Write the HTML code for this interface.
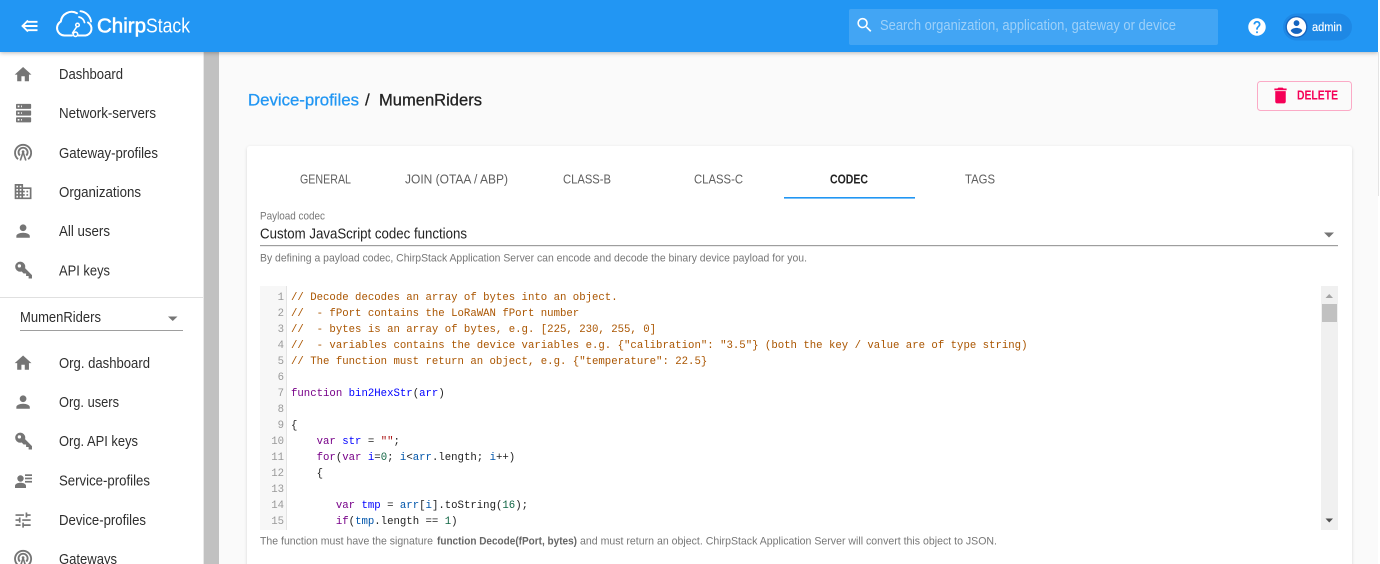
<!DOCTYPE html>
<html><head><meta charset="utf-8"><title>ChirpStack</title>
<style>
html,body{margin:0;padding:0;width:1380px;height:564px;overflow:hidden;background:#fff}
svg{display:block;font-family:"Liberation Sans",sans-serif}
.n{font-size:14.3px;fill:#2e2e2e}
.m{font-family:"Liberation Mono",monospace;font-size:10.68px;white-space:pre;fill:#222}
.l{font-family:"Liberation Mono",monospace;font-size:10.68px;fill:#999;text-anchor:end}
.c{fill:#a50}.k{fill:#708}.d{fill:#00f}.v{fill:#05a}.s{fill:#a11}.u{fill:#164}
.t{font-size:12.6px;fill:#5f5f5f}
.i{fill:#757575}
</style></head><body>
<svg width="1380" height="564" viewBox="0 0 1380 564" xmlns="http://www.w3.org/2000/svg">
<defs>
<filter id="sh" x="-5%" y="-5%" width="110%" height="130%"><feDropShadow dx="0" dy="1" stdDeviation="2" flood-color="#000" flood-opacity=".28"/></filter>
<filter id="cs" x="-2%" y="-5%" width="104%" height="110%"><feDropShadow dx="0" dy="1" stdDeviation="1.5" flood-color="#000" flood-opacity=".14"/></filter>
<path id="home" d="M10 20v-6h4v6h5v-8h3L12 3 2 12h3v8z"/>
<path id="user" d="M12,4A4,4 0 0,1 16,8A4,4 0 0,1 12,12A4,4 0 0,1 8,8A4,4 0 0,1 12,4M12,14C16.42,14 20,15.79 20,18V20H4V18C4,15.79 7.58,14 12,14Z"/>
<path id="key" d="M22,18V22H18V19H15V16H12L9.74,13.74C9.19,13.91 8.61,14 8,14A6,6 0 0,1 2,8A6,6 0 0,1 8,2A6,6 0 0,1 14,8C14,8.61 13.91,9.19 13.74,9.74L22,18M7,5A2,2 0 0,0 5,7A2,2 0 0,0 7,9A2,2 0 0,0 9,7A2,2 0 0,0 7,5Z"/>
<g id="tower" fill="none" stroke="#757575" stroke-width="2.2">
<path d="M6 19.8A9.6 9.6 0 1 1 18 19.8"/>
<path d="M8.2 15.5A5.4 5.4 0 1 1 15.8 15.5"/>
<path d="M12 11.5L8.7 21.5M12 11.5L15.3 21.5" stroke-width="1.9"/>
<circle cx="12" cy="10.8" r="1.6" fill="#757575" stroke="none"/>
</g>
</defs>

<rect width="1380" height="564" fill="#fff"/>
<!-- main background -->
<rect x="219" y="0" width="1161" height="564" fill="#fafafa"/>
<rect x="204" y="0" width="15" height="564" fill="#c1c1c1"/>
<rect x="203" y="0" width="1" height="564" fill="#e8e8e8"/>

<!-- card -->
<rect x="247" y="146" width="1105" height="430" rx="3" fill="#fff" filter="url(#cs)"/>

<!-- header -->
<rect x="0" y="0" width="1378" height="52" fill="#2196f3" filter="url(#sh)"/>
<rect x="1378" y="0" width="2" height="564" fill="#fff"/>
<rect x="1378" y="52" width="1" height="144" fill="#e4e4e4"/>

<!-- back arrow -->
<g stroke="#fff" stroke-width="1.9" fill="none">
<path d="M28 20.5L22.5 26L28 31.5"/>
<path d="M23 26H37.5M27.5 21.8H37.5M27.5 30.2H37.5"/>
</g>

<!-- logo -->
<g fill="none" stroke="#fff" stroke-width="2" stroke-linecap="round">
<path d="M72 35.5H64.5A7.5 7.5 0 0 1 60.8 21.5A11 11 0 0 1 77 13.2"/>
<path d="M88 22.5A7 7 0 0 1 85.5 35.5H78.5"/>
<circle cx="75.5" cy="34.3" r="2.2" stroke-width="1.6"/>
<circle cx="77.5" cy="25" r="1.8" stroke-width="1.5"/>
<path d="M76.8 26.7L72.5 33" stroke-width="1.5"/>
<path d="M79 17A7 7 0 0 1 84.5 22.5" stroke-width="1.8"/>
<path d="M80.5 11.2A12 12 0 0 1 91 21.5" stroke-width="1.9"/>
</g>
<text x="97" y="32.5" font-size="20.5" fill="#fff" stroke="#fff" stroke-width=".55" textLength="49" lengthAdjust="spacingAndGlyphs">Chirp</text>
<text x="146" y="32.5" font-size="20.5" fill="#fff" textLength="44" lengthAdjust="spacingAndGlyphs">Stack</text>

<!-- search -->
<rect x="849" y="9" width="369" height="36" rx="2" fill="#fff" fill-opacity=".15"/>
<g transform="translate(855,15.5) scale(.8)"><path fill="#fff" d="M15.5 14h-.79l-.28-.27C15.41 12.59 16 11.11 16 9.5 16 5.91 13.09 3 9.5 3S3 5.91 3 9.5 5.91 16 9.5 16c1.61 0 3.09-.59 4.23-1.57l.27.28v.79l5 4.99L20.49 19l-4.99-5zm-6 0C7.01 14 5 11.99 5 9.5S7.01 5 9.5 5 14 7.01 14 9.5 11.99 14 9.5 14z"/></g>
<text x="880" y="30" font-size="14.3" fill="#fff" fill-opacity=".48" textLength="296" lengthAdjust="spacingAndGlyphs">Search organization, application, gateway or device</text>

<!-- help -->
<g transform="translate(1246.5,16.5) scale(.875)"><path fill="#fff" d="M12 2C6.48 2 2 6.48 2 12s4.48 10 10 10 10-4.48 10-10S17.52 2 12 2zm1 17h-2v-2h2v2zm2.07-7.75l-.9.92C13.45 12.9 13 13.5 13 15h-2v-.5c0-1.1.45-2.1 1.17-2.83l1.24-1.26c.37-.36.59-.86.59-1.41 0-1.1-.9-2-2-2s-2 .9-2 2H8c0-2.21 1.79-4 4-4s4 1.79 4 4c0 .88-.36 1.68-.93 2.25z"/></g>

<!-- admin chip -->
<rect x="1283" y="13.5" width="69" height="27" rx="13.5" fill="#1e88e5"/>
<circle cx="1296.5" cy="27" r="11" fill="#1565c0"/>
<g transform="translate(1285,15.5) scale(.96)"><path fill="#fff" d="M12 2C6.48 2 2 6.48 2 12s4.48 10 10 10 10-4.48 10-10S17.52 2 12 2zm0 3c1.66 0 3 1.34 3 3s-1.34 3-3 3-3-1.34-3-3 1.34-3 3-3zm0 14.2c-2.5 0-4.71-1.28-6-3.22.03-1.99 4-3.08 6-3.08 1.99 0 5.97 1.09 6 3.08-1.29 1.94-3.5 3.22-6 3.22z"/></g>
<text x="1312" y="31" font-size="12.3" fill="#fff" stroke="#fff" stroke-width=".15" textLength="30" lengthAdjust="spacingAndGlyphs">admin</text>

<!-- sidebar icons -->
<g class="i">
<use href="#home" transform="translate(13,64.5) scale(.84)"/>
<g transform="translate(13.5,103) scale(.84)"><path fill-rule="evenodd" d="M4,1H20A1,1 0 0,1 21,2V6A1,1 0 0,1 20,7H4A1,1 0 0,1 3,6V2A1,1 0 0,1 4,1M4,9H20A1,1 0 0,1 21,10V14A1,1 0 0,1 20,15H4A1,1 0 0,1 3,14V10A1,1 0 0,1 4,9M4,17H20A1,1 0 0,1 21,18V22A1,1 0 0,1 20,23H4A1,1 0 0,1 3,22V18A1,1 0 0,1 4,17M9,5H10V3H9V5M9,13H10V11H9V13M9,21H10V19H9V21M5,3V5H7V3H5M5,11V13H7V11H5M5,19V21H7V19H5Z"/></g>
<use href="#tower" transform="translate(13,142.5) scale(.84)"/>
<g transform="translate(13,181.5) scale(.84)"><path d="M18,15H16V17H18M18,11H16V13H18M20,19H12V17H14V15H12V13H14V11H12V9H20M10,7H8V5H10M10,11H8V9H10M10,15H8V13H10M10,19H8V17H10M6,7H4V5H6M6,11H4V9H6M6,15H4V13H6M6,19H4V17H6M12,7V3H2V21H22V7H12Z"/></g>
<use href="#user" transform="translate(13,221) scale(.84)"/>
<use href="#key" transform="translate(13.5,260) scale(.84)"/>
<use href="#home" transform="translate(13,353) scale(.84)"/>
<use href="#user" transform="translate(13,392) scale(.84)"/>
<use href="#key" transform="translate(13.5,431) scale(.84)"/>
<g transform="translate(15,474)"><circle cx="5.5" cy="4.5" r="3.2"/><path d="M0 14V12C0 9.8 3 8.8 5.5 8.8S11 9.8 11 12V14Z"/><rect x="10" y="0.3" width="7" height="1.7"/><rect x="10" y="3.6" width="7" height="1.7"/><rect x="10" y="6.9" width="7" height="1.7"/></g>
<g transform="translate(13,510) scale(.84)"><path d="M3 17v2h6v-2H3zM3 5v2h10V5H3zm10 16v-2h8v-2h-8v-2h-2v6h2zM7 9v2H3v2h4v2h2V9H7zm14 4v-2H11v2h10zm-6-4h2V7h4V5h-4V3h-2v6z"/></g>
<use href="#tower" transform="translate(13,548.5) scale(.84)"/>
</g>

<!-- sidebar text -->
<text class="n" x="59" y="79" textLength="64" lengthAdjust="spacingAndGlyphs">Dashboard</text>
<text class="n" x="59" y="118" textLength="97" lengthAdjust="spacingAndGlyphs">Network-servers</text>
<text class="n" x="59" y="158" textLength="99" lengthAdjust="spacingAndGlyphs">Gateway-profiles</text>
<text class="n" x="59" y="197" textLength="82" lengthAdjust="spacingAndGlyphs">Organizations</text>
<text class="n" x="59" y="236" textLength="51" lengthAdjust="spacingAndGlyphs">All users</text>
<text class="n" x="59" y="275.5" textLength="51" lengthAdjust="spacingAndGlyphs">API keys</text>
<rect x="0" y="297" width="203" height="1" fill="#e0e0e0"/>
<text class="n" x="20" y="322" textLength="81" lengthAdjust="spacingAndGlyphs">MumenRiders</text>
<path d="M168 316.5h9.5l-4.75 4.5z" fill="#757575"/>
<rect x="20" y="330" width="163" height="1" fill="#9e9e9e"/>
<text class="n" x="59" y="368" textLength="91" lengthAdjust="spacingAndGlyphs">Org. dashboard</text>
<text class="n" x="59" y="407" textLength="60" lengthAdjust="spacingAndGlyphs">Org. users</text>
<text class="n" x="59" y="446" textLength="79" lengthAdjust="spacingAndGlyphs">Org. API keys</text>
<text class="n" x="59" y="485.5" textLength="91" lengthAdjust="spacingAndGlyphs">Service-profiles</text>
<text class="n" x="59" y="525" textLength="87" lengthAdjust="spacingAndGlyphs">Device-profiles</text>
<text class="n" x="59" y="564" textLength="58" lengthAdjust="spacingAndGlyphs">Gateways</text>

<!-- breadcrumb -->
<text x="248" y="105.5" font-size="17" fill="#2196f3" stroke="#2196f3" stroke-width=".3" textLength="111" lengthAdjust="spacingAndGlyphs">Device-profiles</text>
<text x="365" y="105.5" font-size="17" fill="#222" stroke="#222" stroke-width=".25">/</text>
<text x="379" y="105.5" font-size="17" fill="#222" stroke="#222" stroke-width=".3" textLength="103" lengthAdjust="spacingAndGlyphs">MumenRiders</text>

<!-- delete -->
<rect x="1257.5" y="81.5" width="94" height="29" rx="3" fill="#fff" fill-opacity="0" stroke="#fbaac6"/>
<g transform="translate(1270,85) scale(.875)"><path fill="#f50057" d="M6 19c0 1.1.9 2 2 2h8c1.1 0 2-.9 2-2V7H6v12zM19 4h-3.5l-1-1h-5l-1 1H5v2h14V4z"/></g>
<text x="1297" y="99.5" font-size="12.5" font-weight="700" fill="#f50057" textLength="41" lengthAdjust="spacingAndGlyphs">DELETE</text>

<!-- tabs -->
<text class="t" x="300" y="183.5" textLength="51" lengthAdjust="spacingAndGlyphs">GENERAL</text>
<text class="t" x="405" y="183.5" textLength="103" lengthAdjust="spacingAndGlyphs">JOIN (OTAA / ABP)</text>
<text class="t" x="563" y="183.5" textLength="48" lengthAdjust="spacingAndGlyphs">CLASS-B</text>
<text class="t" x="694" y="183.5" textLength="49" lengthAdjust="spacingAndGlyphs">CLASS-C</text>
<text x="830" y="183.5" font-size="12.6" font-weight="700" fill="#222" textLength="38" lengthAdjust="spacingAndGlyphs">CODEC</text>
<text class="t" x="965" y="183.5" textLength="30" lengthAdjust="spacingAndGlyphs">TAGS</text>
<rect x="784" y="197" width="131" height="1.6" fill="#2196f3"/>

<!-- payload select -->
<text x="260" y="219.5" font-size="10.8" fill="#777" textLength="65" lengthAdjust="spacingAndGlyphs">Payload codec</text>
<text x="260" y="238.5" font-size="14.3" fill="#222" textLength="207" lengthAdjust="spacingAndGlyphs">Custom JavaScript codec functions</text>
<path d="M1324 232.5h10l-5 5z" fill="#757575"/>
<rect x="260" y="245" width="1078" height="1.2" fill="#9e9e9e"/>
<text x="260" y="261.5" font-size="10.8" fill="#777" textLength="547" lengthAdjust="spacingAndGlyphs">By defining a payload codec, ChirpStack Application Server can encode and decode the binary device payload for you.</text>

<!-- code editor -->
<rect x="260" y="286" width="26" height="244" fill="#f7f7f7"/>
<rect x="286" y="286" width="1" height="244" fill="#e4e4e4"/>
<g transform="translate(0,-.7)">
<text class="l" x="284" y="300.5">1</text>
<text class="l" x="284" y="316.5">2</text>
<text class="l" x="284" y="332.5">3</text>
<text class="l" x="284" y="348.5">4</text>
<text class="l" x="284" y="364.5">5</text>
<text class="l" x="284" y="380.5">6</text>
<text class="l" x="284" y="396.5">7</text>
<text class="l" x="284" y="412.5">8</text>
<text class="l" x="284" y="428.5">9</text>
<text class="l" x="284" y="444.5">10</text>
<text class="l" x="284" y="460.5">11</text>
<text class="l" x="284" y="476.5">12</text>
<text class="l" x="284" y="492.5">13</text>
<text class="l" x="284" y="508.5">14</text>
<text class="l" x="284" y="524.5">15</text>

<text class="m c" x="291" y="300.5">// Decode decodes an array of bytes into an object.</text>
<text class="m c" x="291" y="316.5">//  - fPort contains the LoRaWAN fPort number</text>
<text class="m c" x="291" y="332.5">//  - bytes is an array of bytes, e.g. [225, 230, 255, 0]</text>
<text class="m c" x="291" y="348.5">//  - variables contains the device variables e.g. {"calibration": "3.5"} (both the key / value are of type string)</text>
<text class="m c" x="291" y="364.5">// The function must return an object, e.g. {"temperature": 22.5}</text>
<text class="m" x="291" y="396.5"><tspan class="k">function</tspan> <tspan class="d">bin2HexStr</tspan>(<tspan class="d">arr</tspan>)</text>
<text class="m" x="291" y="428.5">{</text>
<text class="m" x="291" y="444.5">    <tspan class="k">var</tspan> <tspan class="d">str</tspan> = <tspan class="s">""</tspan>;</text>
<text class="m" x="291" y="460.5">    <tspan class="k">for</tspan>(<tspan class="k">var</tspan> <tspan class="d">i</tspan>=<tspan class="u">0</tspan>; <tspan class="v">i</tspan>&lt;<tspan class="v">arr</tspan>.length; <tspan class="v">i</tspan>++)</text>
<text class="m" x="291" y="476.5">    {</text>
<text class="m" x="291" y="508.5">       <tspan class="k">var</tspan> <tspan class="d">tmp</tspan> = <tspan class="v">arr</tspan>[<tspan class="v">i</tspan>].toString(<tspan class="u">16</tspan>);</text>
<text class="m" x="291" y="524.5">       <tspan class="k">if</tspan>(<tspan class="v">tmp</tspan>.length == <tspan class="u">1</tspan>)</text>
</g>

<!-- code scrollbar -->
<rect x="1321" y="286" width="17" height="244" fill="#f0f0f0"/>
<rect x="1322" y="304" width="15" height="18" fill="#c1c1c1"/>
<path d="M1325.5 298h7.5l-3.75-4z" fill="#a3a3a3"/>
<path d="M1325.5 518.5h7.5l-3.75 4z" fill="#505050"/>

<!-- footer helper -->
<text x="260" y="544.5" font-size="10.8" fill="#777" textLength="173" lengthAdjust="spacingAndGlyphs">The function must have the signature</text>
<text x="437" y="544.5" font-size="10.8" font-weight="700" fill="#666" textLength="140" lengthAdjust="spacingAndGlyphs">function Decode(fPort, bytes)</text>
<text x="580" y="544.5" font-size="10.8" fill="#777" textLength="417" lengthAdjust="spacingAndGlyphs">and must return an object. ChirpStack Application Server will convert this object to JSON.</text>
</svg>
</body></html>
